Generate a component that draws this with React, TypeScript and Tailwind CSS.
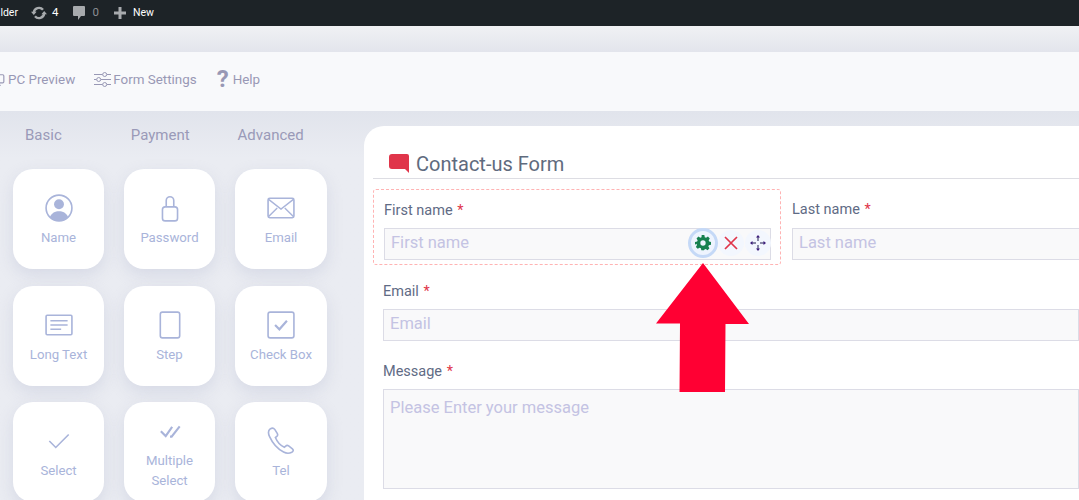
import React from 'react';
import { Monitor } from 'lucide-react';

const font = { fontFamily: 'Roboto, sans-serif' };

const iconCls = 'w-[28px] h-[28px] text-[#a9b4da]';

const NameIcon = () => (
  <svg viewBox="0 0 26 26" className={iconCls}>
    <circle cx="13" cy="13" r="12" fill="none" stroke="currentColor" strokeWidth="1.5" />
    <circle cx="13" cy="9.5" r="4.6" fill="currentColor" />
    <path d="M4.5 21.5c1.6-4 5-5.5 8.500-5.500s6.900 1.500 8.500 5.500a12 12 0 0 1-17 0z" fill="currentColor" />
  </svg>
);
const LockIcon = () => (
  <svg viewBox="0 0 26 26" className={iconCls}>
    <path d="M9.500 11V5a3.500 3.500 0 0 1 7 0v6" fill="none" stroke="currentColor" strokeWidth="1.500" transform="translate(0 1)" />
    <rect x="6" y="12" width="14" height="13" rx="2.500" fill="none" stroke="currentColor" strokeWidth="1.500" />
  </svg>
);
const MailIcon = () => (
  <svg viewBox="0 0 26 26" className={iconCls}>
    <rect x="1" y="4" width="24" height="18" rx="1.500" fill="none" stroke="currentColor" strokeWidth="1.500" />
    <path d="M1.500 5L13 14 24.500 5M1.500 21l8-8M24.500 21l-8-8" fill="none" stroke="currentColor" strokeWidth="1.300" />
  </svg>
);
const LongTextIcon = () => (
  <svg viewBox="0 0 26 26" className={iconCls}>
    <rect x="1" y="4" width="24" height="18" rx="1" fill="none" stroke="currentColor" strokeWidth="1.500" />
    <path d="M5 9h16M5 13h16M5 17h10" fill="none" stroke="currentColor" strokeWidth="1.300" />
  </svg>
);
const StepIcon = () => (
  <svg viewBox="0 0 26 26" className={iconCls}>
    <rect x="4" y="1" width="18" height="24" rx="2" fill="none" stroke="currentColor" strokeWidth="1.500" />
  </svg>
);
const CheckBoxIcon = () => (
  <svg viewBox="0 0 26 26" className={iconCls}>
    <rect x="1" y="1" width="24" height="24" rx="2" fill="none" stroke="currentColor" strokeWidth="1.500" />
    <path d="M7.500 13l4 4 7-8" fill="none" stroke="currentColor" strokeWidth="2" />
  </svg>
);
const SelectIcon = () => (
  <svg viewBox="0 0 26 26" className={iconCls}>
    <path d="M4 13l6 6L22 7" fill="none" stroke="currentColor" strokeWidth="1.500" />
  </svg>
);
const MultiIcon = () => (
  <svg viewBox="0 0 26 26" className={iconCls}>
    <path d="M4.500 9.500l4.500 4.500 6-8.500M13 14.500h1.500L22 5" fill="none" stroke="currentColor" strokeWidth="2" />
  </svg>
);
const TelIcon = () => (
  <svg viewBox="0 0 26 26" className={iconCls}>
    <path
      d="M3 1.800c-2 1.500-2 4.200-.6 7.200 2.500 5.500 7.500 11.500 13 14.300 2.700 1.400 5.200 1.400 7.600.2 1.500-.8 1.800-2.200.6-3.200l-3.500-2.800c-1-.7-2-.6-2.800.2l-1.200 1.100c-3.300-1.400-6.800-5.300-8.300-9l1.300-1.100c.9-.8 1-1.800.4-2.800L7.200 2.200C6.300 1 4.500.7 3 1.800z"
      fill="none"
      stroke="currentColor"
      strokeWidth="1.500"
    />
  </svg>
);

const fields = [
  { label: ['Name'], icon: <NameIcon /> },
  { label: ['Password'], icon: <LockIcon /> },
  { label: ['Email'], icon: <MailIcon /> },
  { label: ['Long Text'], icon: <LongTextIcon /> },
  { label: ['Step'], icon: <StepIcon /> },
  { label: ['Check Box'], icon: <CheckBoxIcon /> },
  { label: ['Select'], icon: <SelectIcon /> },
  { label: ['Multiple', 'Select'], icon: <MultiIcon /> },
  { label: ['Tel'], icon: <TelIcon /> },
];

const FieldCard = ({ label, icon }: { label: string[]; icon: React.ReactNode }) => (
  <div
    className={`w-full h-[100px] bg-white rounded-[20px] shadow-[0_6px_16px_rgba(190,196,216,0.45)] flex flex-col items-center ${
      label.length > 1 ? 'pt-[19px]' : 'pt-[25px]'
    }`}
  >
    {icon}
    <div
      className={`text-[13.200px] leading-[20px] text-[#a9b4da] text-center ${
        label.length > 1 ? 'mt-[2px]' : 'mt-[6px]'
      }`}
    >
      {label.map((l) => (
        <div key={l}>{l}</div>
      ))}
    </div>
  </div>
);

const Label = ({ text }: { text: string }) => (
  <div className="text-[14.500px] leading-[18px] text-[#5f6b85]">
    {text} <span className="text-[#e0354a] ml-[1px]">*</span>
  </div>
);

const Input = ({ placeholder, className = '' }: { placeholder: string; className?: string }) => (
  <div
    className={`h-[32px] bg-[#f9f9fa] border-[1.500px] border-[#dcdce6] pl-[6px] pt-[1px] text-[16.500px] leading-[26px] text-[#c4c3e3] ${className}`}
  >
    {placeholder}
  </div>
);

export default function App() {
  return (
    <div style={font} className="relative w-[1079px] h-[500px] overflow-hidden bg-[#eaecf2] flex flex-col">
      {/* admin bar */}
      <div className="h-[26px] shrink-0 bg-[#1d2327] flex items-center text-[10.500px] text-white overflow-hidden">
        <span className="-ml-[23px] w-[41px] shrink-0 text-right">Builder</span>
        <svg viewBox="0 0 20 20" className="w-[16px] h-[16px] ml-[13px] text-[#a7aaad]" fill="none">
          <path d="M3.500 9.500a6.500 6.500 0 0 1 11.500-3.500M16.500 10.500a6.500 6.500 0 0 1-11.500 3.500" stroke="currentColor" strokeWidth="3" />
          <path d="M0 8.500l7 0-3.500 4zM20 11.500l-7 0 3.500-4z" fill="currentColor" />
        </svg>
        <span className="ml-[5px] text-[11.500px]">4</span>
        <svg viewBox="0 0 12 14" className="w-[12px] h-[14px] ml-[15px] text-[#a7aaad]">
          <path d="M1 0h10a1 1 0 0 1 1 1v8a1 1 0 0 1-1 1H8l-3 4v-4H1a1 1 0 0 1-1-1V1a1 1 0 0 1 1-1z" fill="currentColor" />
        </svg>
        <span className="ml-[7px] text-[11.500px] text-[#8c8f94]">0</span>
        <svg viewBox="0 0 12 12" className="w-[12px] h-[12px] ml-[15px] text-[#a7aaad]">
          <path d="M6 0v12M0 6h12" stroke="currentColor" strokeWidth="3" fill="none" />
        </svg>
        <span className="ml-[7px]">New</span>
      </div>

      {/* gap under the admin bar */}
      <div className="h-[26px] shrink-0 bg-gradient-to-b from-[#f0f1f4] to-[#e3e5ec]" />

      {/* toolbar */}
      <div className="h-[59px] shrink-0 bg-[#f8f9fb] flex items-center text-[13.400px] leading-[16px] text-[#9898b5] pb-[4px]">
        <Monitor size={14} className="-ml-[9px] shrink-0" />
        <span className="ml-[3px]">PC Preview</span>
        <svg viewBox="0 0 17 15" className="w-[17px] h-[15px] ml-[19px]" fill="none" stroke="currentColor" strokeWidth="1">
          <path d="M0 2.500h8.500M13 2.500h4M0 7.500h2.500M7 7.500h10M0 12.500h8.500M13 12.500h4" />
          <circle cx="10.700" cy="2.500" r="2" />
          <circle cx="4.700" cy="7.500" r="2" />
          <circle cx="10.700" cy="12.500" r="2" />
        </svg>
        <span className="ml-[2px]">Form Settings</span>
        <span className="ml-[20px] text-[24px] font-bold leading-none -mt-[2px]">?</span>
        <span className="ml-[4px]">Help</span>
      </div>

      <div className="flex-1 flex min-h-0 bg-gradient-to-b from-[#e1e4ec] to-[#eaecf2] to-[12%]">
        {/* left column */}
        <div className="w-[364px] shrink-0">
          <div className="h-[58px] flex items-start pt-[15px] text-[15px] leading-[18px] text-[#9a9ab8]">
            <span className="ml-[25px]">Basic</span>
            <span className="ml-[69px]">Payment</span>
            <span className="ml-[48px]">Advanced</span>
          </div>
          <div className="ml-[13px] w-[314px] grid grid-cols-[91px_91px_92px] gap-x-[20px] gap-y-[16.500px]">
            {fields.map((f) => (
              <FieldCard key={f.label.join(' ')} label={f.label} icon={f.icon} />
            ))}
          </div>
        </div>

        {/* form panel */}
        <div className="mt-[15px] flex-1 bg-white rounded-tl-[20px] pl-[9px]">
          <div className="h-[38px] mt-[15px] border-b border-[#dddde3] flex items-center pt-[8px]">
            <svg viewBox="0 0 20 19" className="ml-[16px] w-[20px] h-[19px] -mt-[1px]">
              <path d="M3 0h15a2 2 0 0 1 2 2v17l-4-4H3a3 3 0 0 1-3-3V3a3 3 0 0 1 3-3z" fill="#e0354a" />
            </svg>
            <span className="ml-[7px] text-[20px] leading-[24px] text-[#5f6b7e]">Contact-us Form</span>
          </div>

          <div className="flex mt-[10px]">
            <div className="relative w-[408px] h-[76px] shrink-0 border border-dashed border-[#ffb3b3] rounded-[3px] pl-[10px] pt-[12px]">
              <Label text="First name" />
              <Input placeholder="First name" className="mt-[8px] w-[387px]" />
              {/* field actions */}
              <div className="absolute left-[314px] top-[38px] w-[30px] h-[30px] rounded-full bg-[#eef4fe] border-[3px] border-[#c5d9f7] flex items-center justify-center">
                <svg viewBox="0 0 24 24" className="w-[16px] h-[16px]">
                  <path
                    fillRule="evenodd"
                    fill="#17804f"
                    d="M10 1h4l.7 3.200 1.900.8L19.400 3.300l2.800 2.800-1.700 2.800.8 1.900L24 11.500v4l-3.200.7-.8 1.900 1.700 2.800-2.800 2.800-2.800-1.700-1.900.8L13.500 24h-4l-.7-3.200-1.900-.8-2.800 1.700-2.800-2.800 1.700-2.800-.8-1.900L0 15.500v-4l3.200-.7.8-1.900L2.300 6.100l2.800-2.800 2.800 1.700 1.900-.8zM12 9a4 4 0 1 0 0 8 4 4 0 0 0 0-8z"
                    transform="translate(0 -1)"
                  />
                </svg>
              </div>
              <div className="absolute left-[344px] top-[40px] w-[26px] h-[26px] rounded-full bg-[#f3f7fe] flex items-center justify-center">
                <svg viewBox="0 0 14 14" className="w-[14px] h-[14px]">
                  <path d="M1 1l12 12M13 1L1 13" stroke="#e0354a" strokeWidth="1.700" fill="none" />
                </svg>
              </div>
              <div className="absolute left-[371px] top-[40px] w-[26px] h-[26px] rounded-full bg-[#f3f7fe] flex items-center justify-center">
                <svg viewBox="0 0 16 16" className="w-[16px] h-[16px]">
                  <path d="M8 2v4M8 10v4M2 8h4M10 8h4" stroke="#1e1a50" strokeWidth="1" fill="none" />
                  <path d="M8 0l2 2.500H6zM8 16l2-2.500H6zM0 8l2.500-2v4zM16 8l-2.500-2v4z" fill="#3b1a7a" />
                </svg>
              </div>
            </div>
            <div className="ml-[11px] flex-1 pt-[12px]">
              <Label text="Last name" />
              <Input placeholder="Last name" className="mt-[9px] -mr-[10px]" />
            </div>
          </div>

          <div className="ml-[10px] mt-[18px]">
            <Label text="Email" />
            <Input placeholder="Email" className="mt-[8px]" />
          </div>
          <div className="ml-[10px] mt-[22px]">
            <Label text="Message" />
            <Input placeholder="Please Enter your message" className="mt-[8px] !h-[100px] !pt-[5px]" />
          </div>
        </div>
      </div>

      {/* red annotation arrow */}
      <svg viewBox="0 0 94 130" className="absolute left-[656px] top-[263px] w-[94px] h-[130px]">
        <path d="M47 0L93 61H69.500L69 129H23.500L24 60.500H0z" fill="#ff0033" />
      </svg>
    </div>
  );
}
